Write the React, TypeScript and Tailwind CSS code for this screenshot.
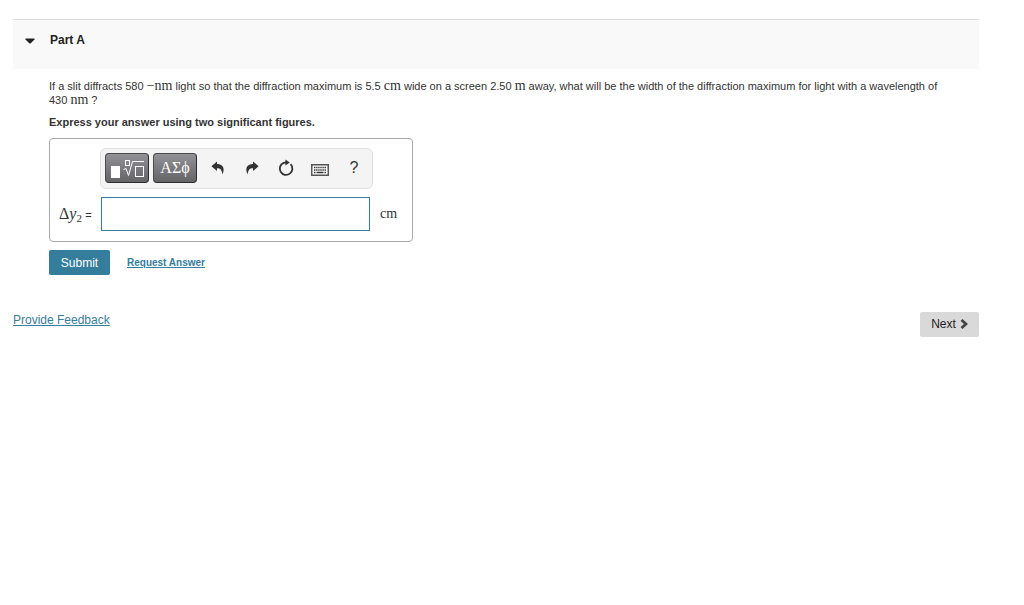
import { useState } from 'react';
import type { ReactNode } from 'react';

function Unit({ children }: { children: ReactNode }) {
  return <span className="font-['Liberation_Serif',serif] text-[14px] leading-none">{children}</span>;
}

function UndoIcon({ flipped = false }: { flipped?: boolean }) {
  return (
    <svg
      width="14"
      height="14"
      viewBox="0 0 14 14"
      fill="#333"
      className={flipped ? '-scale-x-100' : ''}
      aria-hidden="true"
    >
      <path d="M6 0.4 0.4 5.2 6 10V7.2C9 7 10.8 8.4 11.4 13.4 14 8.6 12.8 3.2 6 3.1Z" />
    </svg>
  );
}

function ResetIcon() {
  return (
    <svg width="16" height="18" viewBox="0 0 16 18" aria-hidden="true">
      <path d="M12.6 5.2A6.3 6.3 0 1 1 5.6 3.8L8.6 3.4" fill="none" stroke="#333" strokeWidth="1.8" />
      <path d="M7.4 0.4 11.8 3.6 7.4 6.4Z" fill="#333" />
    </svg>
  );
}

function KeyboardIcon() {
  return (
    <svg width="18" height="13" viewBox="0 0 18 13" aria-hidden="true">
      <rect x="0.75" y="1.75" width="16.5" height="10.5" fill="#fff" stroke="#555" strokeWidth="1.5" />
      <path d="M3 4.5H15M3 7H15" stroke="#333" strokeWidth="1.3" strokeDasharray="1.4 0.7" />
      <path d="M3 9.5H4.5M5.5 9.5H12.5M13.5 9.5H15" stroke="#333" strokeWidth="1.3" />
    </svg>
  );
}

function TemplateIcon() {
  return (
    <svg width="34" height="20" viewBox="0 0 34 20" fill="none" stroke="#fff" aria-hidden="true">
      <rect x="1" y="8" width="9" height="12" fill="#fff" stroke="none" />
      <rect x="15.5" y="2.5" width="4" height="5" />
      <path d="M13.5 11.5 16 10.5 18.5 17.5 22.5 3.5H34" />
      <rect x="25.5" y="8.5" width="8" height="10" />
    </svg>
  );
}

const darkButton =
  'flex h-[30px] w-11 items-center justify-center rounded-[4px] border border-[#4a4a4c] border-r-[#2c2c2e] border-b-[#2c2c2e] bg-gradient-to-b from-[#929297] to-[#656568] text-white';
const plainButton = 'flex h-8 w-[34px] items-center justify-center';

export default function App() {
  const [open, setOpen] = useState(true);
  const [answer, setAnswer] = useState('');

  return (
    <main className="pt-[19px] pr-[45px] pb-8 pl-[13px] font-['Liberation_Sans',Arial,sans-serif] text-xs text-[#333]">
      <header className="border-t border-[#dcdcdc] bg-[#f9f9f9] pb-5">
        <h2>
          <button
            type="button"
            aria-expanded={open}
            onClick={() => setOpen(!open)}
            className="flex items-center pt-3 pl-3 text-xs leading-[17px] font-bold text-[#222]"
          >
            <svg width="10" height="6" viewBox="0 0 10 6" className="mr-[15px]" aria-hidden="true">
              <path d="M0.5 0.5H9.5V1.5L5.5 5.5H4.5L0.5 1.5Z" fill="#222" />
            </svg>
            Part A
          </button>
        </h2>
      </header>

      {open && (
        <section className="pt-2.5 pl-9">
          <p className="text-[11px] leading-[14px]">
            If a slit diffracts 580 <Unit>−nm</Unit> light so that the diffraction maximum is 5.5 <Unit>cm</Unit> wide on a
            screen 2.50 <Unit>m</Unit> away, what will be the width of the diffraction maximum for light with a wavelength
            of <span className="whitespace-nowrap">430 <Unit>nm</Unit> ?</span>
          </p>
          <p className="mt-2 text-[11px] leading-[14px] font-bold">Express your answer using two significant figures.</p>

          <form onSubmit={e => e.preventDefault()}>
            <div className="mt-[9px] w-[364px] rounded-[4px] border border-[#aaa] pt-[9px] pb-2.5">
              {/* Equation toolbar */}
              <div className="ml-[50px] flex h-[41px] w-[273px] items-center rounded-[6px] border border-[#e0e0e0] bg-[#f4f4f4] pb-px pl-1">
                <button type="button" aria-label="Templates" className={darkButton}>
                  <TemplateIcon />
                </button>
                <button
                  type="button"
                  aria-label="Greek symbols"
                  className={`${darkButton} mr-1 ml-1 font-['Liberation_Serif',serif] text-base`}
                >
                  ΑΣϕ
                </button>
                <button type="button" aria-label="Undo" className={plainButton}>
                  <UndoIcon />
                </button>
                <button type="button" aria-label="Redo" className={plainButton}>
                  <UndoIcon flipped />
                </button>
                <button type="button" aria-label="Reset" className={plainButton}>
                  <ResetIcon />
                </button>
                <button type="button" aria-label="Keyboard shortcuts" className={`${plainButton} pt-0.5`}>
                  <KeyboardIcon />
                </button>
                <button type="button" aria-label="Help" className={`${plainButton} text-base`}>
                  ?
                </button>
              </div>

              <div className="mt-2 flex items-center">
                <label htmlFor="answer" className="w-[51px] pl-[9px] whitespace-nowrap">
                  <span className="font-['Liberation_Serif',serif] text-base">
                    Δ<i>y</i>
                    <sub className="text-[11px]">2</sub>
                  </span>{' '}
                  <span className="text-[11px]">=</span>
                </label>
                <input
                  id="answer"
                  type="text"
                  value={answer}
                  onChange={e => setAnswer(e.target.value)}
                  className="h-[34px] w-[269px] border border-[#357d9c] bg-white px-2 text-sm outline-none"
                />
                <span className="ml-2.5">
                  <Unit>cm</Unit>
                </span>
              </div>
            </div>

            <div className="mt-2 flex items-center">
              <button type="submit" className="h-[25px] w-[61px] rounded-[2px] bg-[#357d9c] text-xs text-white">
                Submit
              </button>
              <a href="#answer" className="ml-[17px] text-[10px] font-bold text-[#357d9c] underline">
                Request Answer
              </a>
            </div>
          </form>
        </section>
      )}

      <footer className="mt-[37px] flex items-start justify-between">
        <a href="#feedback" className="text-xs text-[#357d9c] underline">
          Provide Feedback
        </a>
        <button
          type="button"
          className="flex h-[25px] w-[59px] items-center justify-center gap-1 rounded-[2px] bg-[#d9d9d9] pb-px text-xs text-[#222]"
        >
          Next
          <svg width="8" height="10" viewBox="0 0 8 10" aria-hidden="true">
            <path d="M1.5 1 6 5 1.5 9" fill="none" stroke="#444" strokeWidth="2.8" />
          </svg>
        </button>
      </footer>
    </main>
  );
}
